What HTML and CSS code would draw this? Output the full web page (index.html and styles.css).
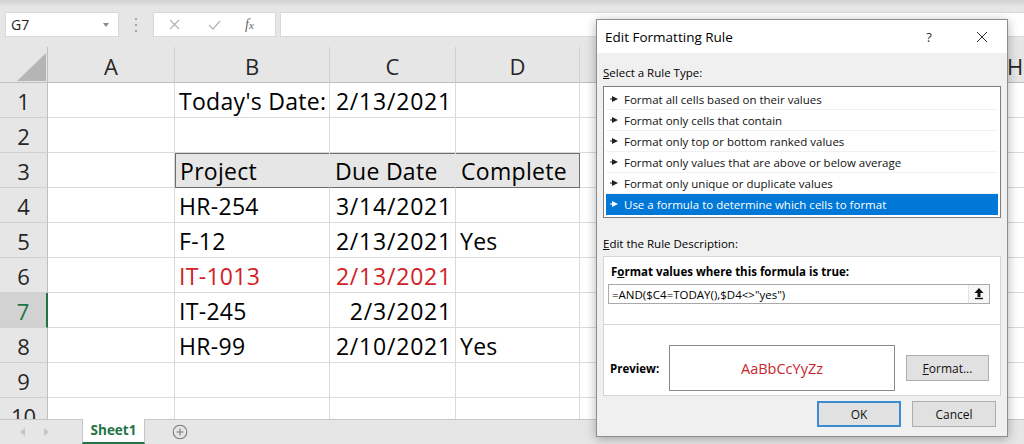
FILE: index.html
```html
<!DOCTYPE html>
<html>
<head>
<meta charset="utf-8">
<title>Edit Formatting Rule</title>
<link rel="stylesheet" href="styles.css">
</head>
<body>
<div class="app">
  <div class="ribbon-edge"></div>
  <div class="fbar">
    <div class="namebox"><span>G7</span>
      <svg class="nb-arrow" width="6" height="4" viewBox="0 0 6 4"><path d="M0 0h6L3 4z" fill="#8a8a8a"/></svg>
    </div>
    <div class="fb-dots"><i></i><i></i><i></i></div>
    <div class="fb-btns">
      <svg width="11" height="11" viewBox="0 0 11 11"><path d="M1 1l9 9M10 1l-9 9" stroke="#b4b4b4" stroke-width="1.2" fill="none"/></svg>
      <svg width="13" height="10" viewBox="0 0 13 10"><path d="M1 5l4 4 7-8" stroke="#b4b4b4" stroke-width="1.2" fill="none"/></svg>
      <span class="fx">f<span class="fx-x">x</span></span>
    </div>
    <div class="fb-input"></div>
  </div>

  <div class="sheet">
    <div class="corner"><div class="corner-tri"></div></div>
    <div class="ch">A</div><div class="ch">B</div><div class="ch">C</div><div class="ch">D</div><div class="ch">E</div><div class="ch">F</div><div class="ch sel-col">G</div><div class="ch">H</div>

    <div class="rh">1</div><div class="c"></div><div class="c">Today's Date:</div><div class="c r">2/13/2021</div><div class="c"></div><div class="c"></div><div class="c"></div><div class="c"></div><div class="c"></div>
    <div class="rh">2</div><div class="c"></div><div class="c"></div><div class="c"></div><div class="c"></div><div class="c"></div><div class="c"></div><div class="c"></div><div class="c"></div>
    <div class="rh">3</div><div class="c"></div><div class="c th th-l">Project</div><div class="c th">Due Date</div><div class="c th th-r">Complete</div><div class="c"></div><div class="c"></div><div class="c"></div><div class="c"></div>
    <div class="rh">4</div><div class="c"></div><div class="c">HR-254</div><div class="c r">3/14/2021</div><div class="c"></div><div class="c"></div><div class="c"></div><div class="c"></div><div class="c"></div>
    <div class="rh">5</div><div class="c"></div><div class="c">F-12</div><div class="c r">2/13/2021</div><div class="c">Yes</div><div class="c"></div><div class="c"></div><div class="c"></div><div class="c"></div>
    <div class="rh">6</div><div class="c"></div><div class="c red">IT-1013</div><div class="c r red">2/13/2021</div><div class="c"></div><div class="c"></div><div class="c"></div><div class="c"></div><div class="c"></div>
    <div class="rh sel-row">7</div><div class="c"></div><div class="c">IT-245</div><div class="c r">2/3/2021</div><div class="c"></div><div class="c"></div><div class="c"></div><div class="c"></div><div class="c"></div>
    <div class="rh">8</div><div class="c"></div><div class="c">HR-99</div><div class="c r">2/10/2021</div><div class="c">Yes</div><div class="c"></div><div class="c"></div><div class="c"></div><div class="c"></div>
    <div class="rh">9</div><div class="c"></div><div class="c"></div><div class="c"></div><div class="c"></div><div class="c"></div><div class="c"></div><div class="c"></div><div class="c"></div>
    <div class="rh">10</div><div class="c"></div><div class="c"></div><div class="c"></div><div class="c"></div><div class="c"></div><div class="c"></div><div class="c"></div><div class="c"></div>
  </div>

  <div class="tabbar">
    <div class="tab-nav">
      <svg width="5" height="8" viewBox="0 0 5 8"><path d="M5 0v8L0 4z" fill="#c4c4c4"/></svg>
      <svg width="5" height="8" viewBox="0 0 5 8"><path d="M0 0v8l5-4z" fill="#c4c4c4"/></svg>
    </div>
    <div class="tab">Sheet1</div>
    <div class="tab-add">
      <svg width="16" height="16" viewBox="0 0 16 16"><circle cx="8" cy="8" r="6.8" stroke="#7a7a7a" stroke-width="1.1" fill="none"/><path d="M8 4.5v7M4.5 8h7" stroke="#7a7a7a" stroke-width="1.1"/></svg>
    </div>
  </div>

  <div class="dialog">
    <div class="dlg-title">
      <span class="dlg-name">Edit Formatting Rule</span>
      <span class="dlg-help">?</span>
      <span class="dlg-close"><svg width="12" height="12" viewBox="0 0 12 12"><path d="M1 1l10 10M11 1L1 11" stroke="#333" stroke-width="1" fill="none"/></svg></span>
    </div>
    <div class="dlg-body">
      <div class="dlg-label"><u>S</u>elect a Rule Type:</div>
      <div class="rulelist">
        <div class="rule"><svg class="ar" width="8" height="6" viewBox="0 0 8 6"><path d="M0 2.5h3v1H0zM2 0l6 3-6 3z"/></svg>Format all cells based on their values</div>
        <div class="rule"><svg class="ar" width="8" height="6" viewBox="0 0 8 6"><path d="M0 2.5h3v1H0zM2 0l6 3-6 3z"/></svg>Format only cells that contain</div>
        <div class="rule"><svg class="ar" width="8" height="6" viewBox="0 0 8 6"><path d="M0 2.5h3v1H0zM2 0l6 3-6 3z"/></svg>Format only top or bottom ranked values</div>
        <div class="rule"><svg class="ar" width="8" height="6" viewBox="0 0 8 6"><path d="M0 2.5h3v1H0zM2 0l6 3-6 3z"/></svg>Format only values that are above or below average</div>
        <div class="rule"><svg class="ar" width="8" height="6" viewBox="0 0 8 6"><path d="M0 2.5h3v1H0zM2 0l6 3-6 3z"/></svg>Format only unique or duplicate values</div>
        <div class="rule rule-sel"><svg class="ar" width="8" height="6" viewBox="0 0 8 6"><path d="M0 2.5h3v1H0zM2 0l6 3-6 3z"/></svg>Use a formula to determine which cells to format</div>
      </div>
      <div class="dlg-label label2"><u>E</u>dit the Rule Description:</div>
      <div class="desc">
        <div class="desc-top">
          <div class="desc-bold">F<u>o</u>rmat values where this formula is true:</div>
          <div class="formula">
            <span class="formula-text">=AND($C4=TODAY(),$D4&lt;&gt;"yes")</span>
            <span class="collapse"><svg width="10" height="12" viewBox="0 0 10 12"><path d="M5 0L0.5 5H3.5V9H6.5V5H9.5Z" fill="#111"/><path d="M1 10.5h8" stroke="#111" stroke-width="1.4"/></svg></span>
          </div>
        </div>
        <div class="desc-bottom">
          <div class="preview-label">Preview:</div>
          <div class="preview-box">AaBbCcYyZz</div>
          <div class="btn fmt-btn"><u>F</u>ormat...</div>
        </div>
      </div>
      <div class="dlg-buttons">
        <div class="btn btn-ok">OK</div>
        <div class="btn">Cancel</div>
      </div>
    </div>
  </div>
</div>
</body>
</html>
```

FILE: styles.css
```css
html, body {
  margin: 0;
  padding: 0;
}
body {
  width: 1024px;
  height: 444px;
  overflow: hidden;
  background: #e6e6e6;
  font-family: "Open Sans", "Noto Sans", sans-serif;
}
.app {
  position: relative;
  width: 1024px;
  height: 444px;
  overflow: hidden;
  display: flex;
  flex-direction: column;
  background: #e6e6e6;
}
.ribbon-edge {
  height: 12px;
  flex: none;
  background: linear-gradient(#d2d2d2, #e6e6e6 7px);
}

/* formula bar */
.fbar {
  height: 25px;
  flex: none;
  display: flex;
  padding-left: 5px;
  margin-bottom: 10px;
}
.namebox {
  width: 114px;
  box-sizing: border-box;
  background: #fff;
  border: 1px solid #d9d9d9;
  display: flex;
  align-items: center;
  justify-content: space-between;
  padding: 0 9px 0 5px;
  font-size: 14px;
  color: #222;
}
.fb-dots {
  width: 34px;
  display: flex;
  flex-direction: column;
  align-items: center;
  justify-content: center;
  gap: 4px;
}
.fb-dots i {
  display: block;
  width: 2px;
  height: 2px;
  background: #a6a6a6;
}
.fb-btns {
  width: 123px;
  box-sizing: border-box;
  background: #fff;
  border: 1px solid #d9d9d9;
  display: flex;
  align-items: center;
  padding-left: 15px;
  gap: 28px;
}
.fx {
  font-family: "Liberation Serif", "DejaVu Serif", serif;
  font-style: italic;
  font-size: 14px;
  color: #666;
  margin-left: -4px;
}
.fx-x {
  font-size: 11px;
}
.fb-input {
  flex: 1;
  margin-left: 4px;
  background: #fff;
  border: 1px solid #d9d9d9;
  border-right: none;
}

/* sheet grid */
.sheet {
  display: grid;
  grid-template-columns: 48px 127px 155px 126px 124px 125px 124px 124px 125px;
  grid-template-rows: 36px repeat(10, 35px);
  height: 372px;
  flex: none;
  overflow: hidden;
  background: #fff;
}
.corner {
  background: #e6e6e6;
  border-right: 1px solid #bfbfbf;
  border-bottom: 1px solid #bfbfbf;
  box-sizing: border-box;
  display: flex;
  align-items: flex-end;
  justify-content: flex-end;
  padding: 0 1px 1px 0;
}
.corner-tri {
  width: 29px;
  height: 28px;
  background: #b5b5b5;
  clip-path: polygon(100% 0, 100% 100%, 0 100%);
}
.ch {
  background: #e6e6e6;
  border-right: 1px solid #d0d0d0;
  border-bottom: 1px solid #bfbfbf;
  box-sizing: border-box;
  text-align: center;
  font-size: 22px;
  line-height: 38px;
  color: #262626;
}
.ch.sel-col {
  background: #d2d2d2;
  color: #217346;
}
.rh {
  background: #e6e6e6;
  border-right: 1px solid #bfbfbf;
  border-bottom: 1px solid #d0d0d0;
  box-sizing: border-box;
  text-align: center;
  font-size: 22px;
  line-height: 37px;
  color: #262626;
}
.rh.sel-row {
  background: #d2d2d2;
  color: #217346;
  border-right: 2px solid #217346;
}
.c {
  border-right: 1px solid #dadada;
  border-bottom: 1px solid #dadada;
  box-sizing: border-box;
  font-size: 23px;
  line-height: 36px;
  padding: 0 4px;
  white-space: nowrap;
  color: #000;
  letter-spacing: 0.3px;
}
.c.r {
  text-align: right;
  letter-spacing: 0.8px;
  padding-right: 3px;
}
.c.red {
  color: #d22128;
}
.c.th {
  background: #e7e6e6;
  border-right-color: #e7e6e6;
  border-bottom-color: #6e6e6e;
  box-shadow: inset 0 1px 0 #6e6e6e;
  padding-left: 5px;
}
.c.th-l {
  box-shadow: inset 0 1px 0 #6e6e6e, inset 1px 0 0 #6e6e6e;
}
.c.th-r {
  border-right-color: #6e6e6e;
}

/* sheet tabs */
.tabbar {
  flex: 1;
  display: flex;
  background: #e6e6e6;
  border-top: 1px solid #c6c6c6;
}
.tab-nav {
  width: 82px;
  display: flex;
  align-items: center;
  padding-left: 20px;
  gap: 19px;
  box-sizing: border-box;
}
.tab {
  width: 63px;
  box-sizing: border-box;
  background: #fff;
  border-left: 1px solid #c6c6c6;
  border-right: 1px solid #c6c6c6;
  border-bottom: 2px solid #217346;
  margin-top: -1px;
  text-align: center;
  font-weight: 700;
  font-size: 13.5px;
  line-height: 23px;
  color: #217346;
}
.tab-add {
  display: flex;
  align-items: center;
  margin-left: 27px;
}

/* dialog */
.dialog {
  position: absolute;
  left: 596px;
  top: 19px;
  width: 412px;
  height: 418px;
  box-sizing: border-box;
  border: 1px solid #8e8e8e;
  background: #f0f0f0;
  box-shadow: 0 2px 10px rgba(0, 0, 0, 0.3);
  font-size: 11.5px;
  color: #000;
}
.dlg-title {
  height: 33px;
  background: #fff;
  display: flex;
  align-items: center;
  padding-left: 8px;
}
.dlg-name {
  flex: 1;
  font-size: 13.5px;
  color: #000;
}
.dlg-help {
  width: 20px;
  text-align: center;
  font-size: 13px;
  color: #333;
}
.dlg-close {
  width: 30px;
  margin-left: 28px;
  margin-right: 10px;
  display: flex;
  justify-content: center;
}
.dlg-body {
  padding: 0 6px;
}
.dlg-label {
  height: 16px;
  line-height: 16px;
  margin-top: 12px;
  margin-bottom: 5px;
  color: #000;
}
.label2 {
  margin-top: 18px;
  margin-bottom: 4px;
}
.rulelist {
  height: 132px;
  box-sizing: border-box;
  background: #fff;
  border: 1px solid #7e7e7e;
  padding: 2px;
}
.rule {
  height: 21px;
  box-sizing: border-box;
  display: flex;
  align-items: center;
  padding-left: 4px;
  border-bottom: 1px solid #f1f1f1;
  color: #111;
}
.rule .ar {
  margin-right: 6px;
  fill: #222;
}
.rule-sel {
  background: #0078d7;
  color: #fff;
  border-bottom-color: #0078d7;
}
.rule-sel .ar {
  fill: #fff;
}
.desc {
  background: #fff;
  border: 1px solid #d5d5d5;
}
.desc-top {
  height: 68px;
  box-sizing: border-box;
  padding: 7px 10px 0 4px;
  border-bottom: 1px solid #d5d5d5;
}
.desc-bold {
  font-weight: 700;
  line-height: 16px;
  margin: 0 0 4px 3px;
}
.formula {
  height: 20px;
  box-sizing: border-box;
  border: 1px solid #a9a9a9;
  display: flex;
  align-items: center;
}
.formula-text {
  flex: 1;
  padding-left: 3px;
}
.collapse {
  width: 20px;
  height: 18px;
  display: flex;
  align-items: center;
  justify-content: center;
  border-left: 1px solid #e4e4e4;
  background: #f7f7f7;
}
.desc-bottom {
  height: 70px;
  box-sizing: border-box;
  padding: 20px 0 4px 6px;
  display: flex;
  align-items: center;
}
.preview-label {
  font-weight: 700;
  width: 59px;
}
.preview-box {
  width: 226px;
  height: 46px;
  box-sizing: border-box;
  border: 1px solid #8a8a8a;
  display: flex;
  align-items: center;
  justify-content: center;
  font-size: 14.5px;
  color: #c8252c;
}
.btn {
  width: 84px;
  height: 26px;
  box-sizing: border-box;
  background: #e1e1e1;
  border: 1px solid #adadad;
  display: flex;
  align-items: center;
  justify-content: center;
  font-size: 12px;
  color: #111;
}
.fmt-btn {
  width: 83px;
  margin-left: 11px;
}
.dlg-buttons {
  display: flex;
  justify-content: flex-end;
  gap: 11px;
  margin-top: 5px;
  padding-right: 5px;
}
.btn-ok {
  border: 2px solid #3c8bd3;
}
```
